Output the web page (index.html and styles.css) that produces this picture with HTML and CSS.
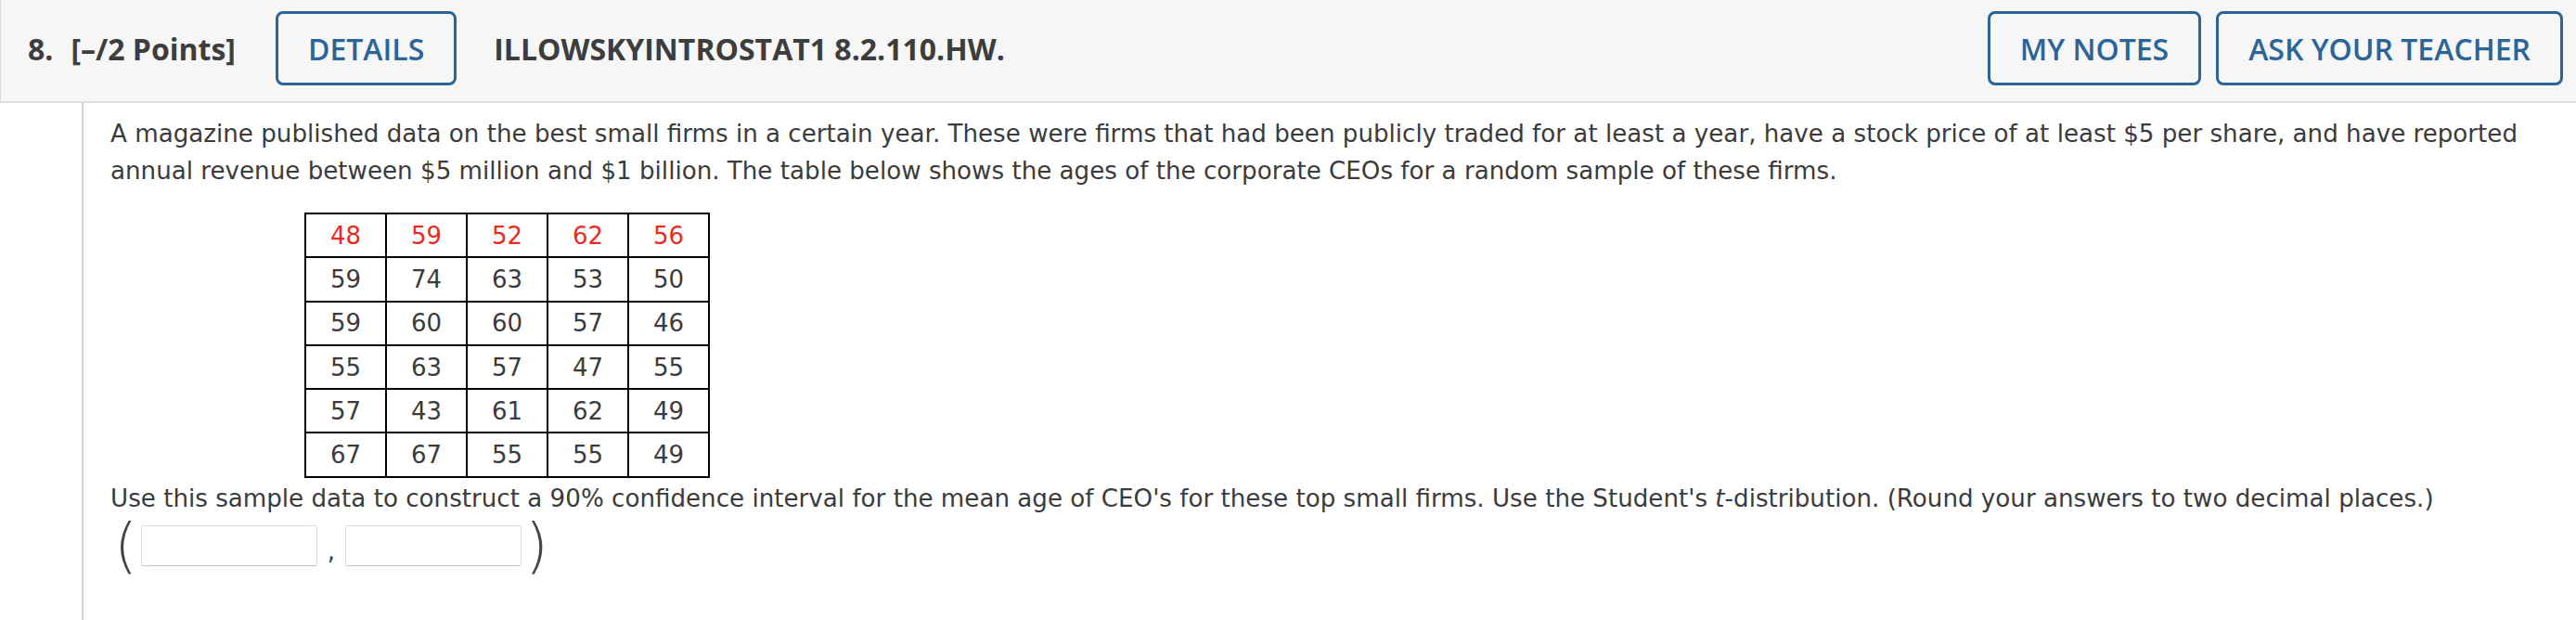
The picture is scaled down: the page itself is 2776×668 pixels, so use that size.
FILE: index.html
```html
<!DOCTYPE html>
<html lang="en">
<head>
<meta charset="utf-8">
<title>Question 8</title>
<link rel="stylesheet" href="styles.css">
</head>
<body>
<div class="question">
  <div class="q-header">
    <div class="q-title">
      <span class="q-num">8.</span>
      <span class="q-points">[–/2 Points]</span>
      <button class="btn btn-details">DETAILS</button>
      <span class="q-id">ILLOWSKYINTROSTAT1 8.2.110.HW.</span>
    </div>
    <div class="q-actions">
      <button class="btn">MY NOTES</button>
      <button class="btn">ASK YOUR TEACHER</button>
    </div>
  </div>
  <div class="q-body">
    <p class="q-text">A magazine published data on the best small firms in a certain year. These were firms that had been publicly traded for at least a year, have a stock price of at least $5 per share, and have reported annual revenue between $5 million and $1 billion. The table below shows the ages of the corporate CEOs for a random sample of these firms.</p>
    <table class="data">
      <tr class="hl"><td>48</td><td>59</td><td>52</td><td>62</td><td>56</td></tr>
      <tr><td>59</td><td>74</td><td>63</td><td>53</td><td>50</td></tr>
      <tr><td>59</td><td>60</td><td>60</td><td>57</td><td>46</td></tr>
      <tr><td>55</td><td>63</td><td>57</td><td>47</td><td>55</td></tr>
      <tr><td>57</td><td>43</td><td>61</td><td>62</td><td>49</td></tr>
      <tr><td>67</td><td>67</td><td>55</td><td>55</td><td>49</td></tr>
    </table>
    <p class="q-text q-prompt">Use this sample data to construct a 90% confidence interval for the mean age of CEO's for these top small firms. Use the Student's <i>t</i>-distribution. (Round your answers to two decimal places.)</p>
    <div class="answer">
      <span class="paren">(</span>
      <input class="ans" type="text">
      <span class="comma">,</span>
      <input class="ans" type="text">
      <span class="paren">)</span>
    </div>
  </div>
</div>
</body>
</html>
```
FILE: styles.css
```css
* {
  box-sizing: border-box;
}

html, body {
  margin: 0;
  padding: 0;
  background: #ffffff;
}

body {
  font-family: "DejaVu Sans", Verdana, sans-serif;
  color: #3b3b3b;
}

.q-header {
  display: flex;
  justify-content: space-between;
  align-items: center;
  height: 111px;
  padding: 12px 14px 17px 29px;
  background: #f6f6f6;
  border-left: 1px solid #dcdcdc;
  border-bottom: 2px solid #dcdcdc;
  font-family: "Open Sans", "Liberation Sans", sans-serif;
  color: #3d3d3d;
}

.q-title {
  display: flex;
  align-items: center;
}

.q-num,
.q-points,
.q-id {
  font-size: 32px;
  font-weight: 700;
}

.q-num {
  margin-right: 19px;
}

.q-points {
  margin-right: 43px;
}

.q-id {
  margin-left: 40px;
}

.q-actions {
  display: flex;
  gap: 16px;
}

.btn {
  height: 80px;
  padding: 0 32px;
  background: transparent;
  border: 3.5px solid #2b6496;
  border-radius: 8px;
  font-family: "Open Sans", "Liberation Sans", sans-serif;
  font-size: 32px;
  font-weight: 600;
  color: #2b6496;
}

.q-body {
  margin-left: 88px;
  min-height: calc(100vh - 111px);
  padding: 13px 36px 0 29px;
  border-left: 2px solid #cfcfcf;
}

.q-text {
  margin: 0;
  font-size: 26.15px;
  line-height: 40px;
}

.data {
  margin: 25px 0 2px 209px;
  border-collapse: collapse;
}

.data td {
  width: 87px;
  height: 47.3px;
  padding: 0;
  border: 2px solid #000;
  text-align: center;
  font-size: 26px;
  color: #3b3b3b;
}

.data .hl td {
  color: #ea2a1f;
}

.answer {
  display: flex;
  align-items: center;
  height: 62px;
}

.paren {
  width: 33px;
  text-align: center;
  font-family: "DejaVu Sans", sans-serif;
  font-weight: 200;
  font-size: 64px;
  line-height: 60px;
  color: #444;
}

.ans {
  width: 190px;
  height: 44px;
  margin: 0;
  padding: 0 8px;
  background: #fff;
  border: 1px solid #dcdcdc;
  border-bottom-color: #c2c2c2;
  border-radius: 2px;
  font-size: 26px;
}

.comma {
  width: 30px;
  text-align: center;
  font-size: 26px;
  line-height: 40px;
  padding-top: 12px;
}
```
